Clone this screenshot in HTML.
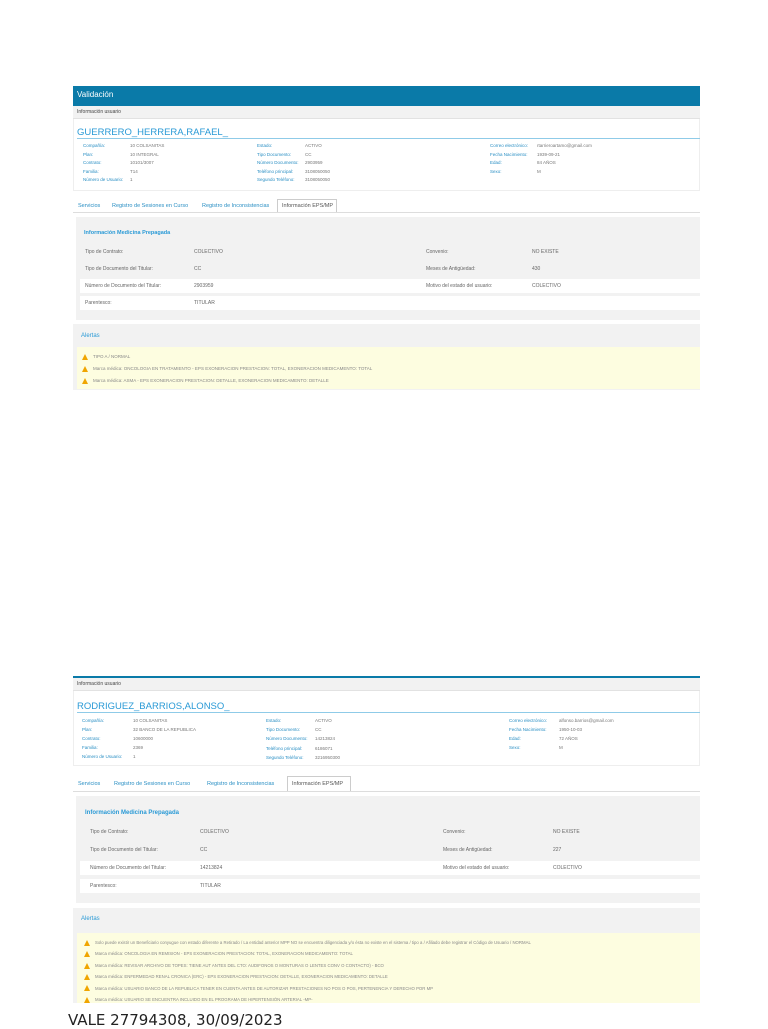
<!DOCTYPE html>
<html><head><meta charset="utf-8">
<style>
*{margin:0;padding:0;box-sizing:border-box}
body{width:768px;height:1024px;background:#fff;position:relative;overflow:hidden;font-family:"Liberation Sans",sans-serif;color:#555}
.a{position:absolute;white-space:nowrap}
.lb{color:#2a8fc4;font-size:4.5px}
.v{color:#777;font-size:4.5px}
.t{font-size:5.5px;color:#2a8fc4}
.r{color:#666;font-size:5px}
.warn{display:inline-block;width:0;height:0;border-left:3.5px solid transparent;border-right:3.5px solid transparent;border-bottom:6px solid #f0a500;vertical-align:middle;margin-right:5px}
.al{font-size:4.5px;color:#888}
</style></head><body>

<div class="a" style="left:73px;top:86px;width:627px;height:20px;background:#0a7aa8"></div>
<div class="a" style="left:77px;top:90px;font-size:8px;color:#fff">Validación</div>
<div class="a" style="left:73px;top:106px;width:627px;height:13px;background:#f2f2f2;border-bottom:1px solid #e2e2e2"></div>
<div class="a" style="left:77px;top:109px;font-size:5px;color:#444">Información usuario</div>
<div class="a" style="left:73px;top:119px;width:627px;height:72px;border:1px solid #eee;border-top:none"></div>
<div class="a" style="left:77px;top:127px;font-size:9.5px;color:#2a9ad6">GUERRERO_HERRERA,RAFAEL_</div>
<div class="a" style="left:77px;top:138px;width:623px;height:1px;background:#8fcbe8"></div>
<div class="a lb" style="left:83px;top:142px;line-height:8.6px">Compañía:<br>Plan:<br>Contrato:<br>Familia:<br>Número de Usuario:</div>
<div class="a v" style="left:130px;top:142px;line-height:8.6px">10 COLSANITAS<br>10 INTEGRAL<br>10101/3007<br>T14<br>1</div>
<div class="a lb" style="left:257px;top:142px;line-height:8.6px">Estado:<br>Tipo Documento:<br>Número Documento:<br>Teléfono principal:<br>Segundo Teléfono:</div>
<div class="a v" style="left:305px;top:142px;line-height:8.6px">ACTIVO<br>CC<br>2903959<br>3108050050<br>3108050050</div>
<div class="a lb" style="left:490px;top:142px;line-height:8.6px">Correo electrónico:<br>Fecha Nacimiento:<br>Edad:<br>Sexo:</div>
<div class="a v" style="left:537px;top:142px;line-height:8.6px">rtarrieroartamo@gmail.com<br>1939-09-21<br>84 AÑOS<br>M</div>

<div class="a t" style="left:78px;top:203px">Servicios</div>
<div class="a t" style="left:112px;top:203px">Registro de Sesiones en Curso</div>
<div class="a t" style="left:202px;top:203px">Registro de Inconsistencias</div>
<div class="a" style="left:277px;top:199px;width:60px;height:14px;border:1px solid #ccc;border-bottom:none;background:#fff"></div>
<div class="a" style="left:282px;top:203px;font-size:5.5px;color:#555">Información EPS/MP</div>
<div class="a" style="left:73px;top:212px;width:627px;height:1px;background:#ddd"></div>

<div class="a" style="left:76px;top:217px;width:624px;height:103px;background:#f2f2f2"></div>
<div class="a" style="left:84px;top:230px;font-size:5.5px;color:#2a9ad6;font-weight:bold">Información Medicina Prepagada</div>
<div class="a" style="left:80px;top:279px;width:620px;height:14px;background:#fff"></div>
<div class="a" style="left:80px;top:296px;width:620px;height:14px;background:#fff"></div>
<div class="a r" style="left:85px;top:249px">Tipo de Contrato:</div><div class="a r" style="left:194px;top:249px">COLECTIVO</div>
<div class="a r" style="left:426px;top:249px">Convenio:</div><div class="a r" style="left:532px;top:249px">NO EXISTE</div>
<div class="a r" style="left:85px;top:266px">Tipo de Documento del Titular:</div><div class="a r" style="left:194px;top:266px">CC</div>
<div class="a r" style="left:426px;top:266px">Meses de Antigüedad:</div><div class="a r" style="left:532px;top:266px">430</div>
<div class="a r" style="left:85px;top:283px">Número de Documento del Titular:</div><div class="a r" style="left:194px;top:283px">2903959</div>
<div class="a r" style="left:426px;top:283px">Motivo del estado del usuario:</div><div class="a r" style="left:532px;top:283px">COLECTIVO</div>
<div class="a r" style="left:85px;top:300px">Parentesco:</div><div class="a r" style="left:194px;top:300px">TITULAR</div>

<div class="a" style="left:73px;top:324px;width:627px;height:66px;background:#f2f2f2"></div>
<div class="a" style="left:81px;top:333px;font-size:6px;color:#2a9ad6">Alertas</div>
<div class="a" style="left:77px;top:347px;width:623px;height:42px;background:#fdfde0"></div>
<div class="a al" style="left:82px;top:351px;line-height:12px"><span class="warn"></span>TIPO A / NORMAL<br><span class="warn"></span>Marca médica: ONCOLOGIA EN TRATAMIENTO - EPS EXONERACION PRESTACION: TOTAL, EXONERACION MEDICAMENTO: TOTAL<br><span class="warn"></span>Marca médica: ASMA - EPS EXONERACION PRESTACION: DETALLE, EXONERACION MEDICAMENTO: DETALLE</div>

<div class="a" style="left:73px;top:676px;width:627px;height:2px;background:#0a7aa8"></div>
<div class="a" style="left:73px;top:678px;width:627px;height:13px;background:#f2f2f2;border-bottom:1px solid #e2e2e2"></div>
<div class="a" style="left:77px;top:681px;font-size:5px;color:#444">Información usuario</div>
<div class="a" style="left:73px;top:691px;width:627px;height:75px;border:1px solid #eee;border-top:none"></div>
<div class="a" style="left:77px;top:701px;font-size:9.5px;color:#2a9ad6">RODRIGUEZ_BARRIOS,ALONSO_</div>
<div class="a" style="left:77px;top:712px;width:623px;height:1px;background:#8fcbe8"></div>
<div class="a lb" style="left:82px;top:716px;line-height:9px">Compañía:<br>Plan:<br>Contrato:<br>Familia:<br>Número de Usuario:</div>
<div class="a v" style="left:133px;top:716px;line-height:9px">10 COLSANITAS<br>32 BANCO DE LA REPUBLICA<br>10600000<br>2369<br>1</div>
<div class="a lb" style="left:266px;top:716px;line-height:9.2px">Estado:<br>Tipo Documento:<br>Número Documento:<br>Teléfono principal:<br>Segundo Teléfono:</div>
<div class="a v" style="left:315px;top:716px;line-height:9.2px">ACTIVO<br>CC<br>14213824<br>6186071<br>3216950300</div>
<div class="a lb" style="left:509px;top:716px;line-height:9px">Correo electrónico:<br>Fecha Nacimiento:<br>Edad:<br>Sexo:</div>
<div class="a v" style="left:559px;top:716px;line-height:9px">alfonso.barrios@gmail.com<br>1950-10-03<br>72 AÑOS<br>M</div>

<div class="a t" style="left:78px;top:781px">Servicios</div>
<div class="a t" style="left:114px;top:781px">Registro de Sesiones en Curso</div>
<div class="a t" style="left:207px;top:781px">Registro de Inconsistencias</div>
<div class="a" style="left:287px;top:776px;width:64px;height:16px;border:1px solid #ccc;border-bottom:none;background:#fff"></div>
<div class="a" style="left:292px;top:781px;font-size:5.5px;color:#555">Información EPS/MP</div>
<div class="a" style="left:73px;top:791px;width:627px;height:1px;background:#ddd"></div>

<div class="a" style="left:76px;top:796px;width:624px;height:107px;background:#f2f2f2"></div>
<div class="a" style="left:85px;top:810px;font-size:6px;color:#2a9ad6;font-weight:bold">Información Medicina Prepagada</div>
<div class="a" style="left:80px;top:861px;width:620px;height:14px;background:#fff"></div>
<div class="a" style="left:80px;top:879px;width:620px;height:14px;background:#fff"></div>
<div class="a r" style="left:90px;top:829px">Tipo de Contrato:</div><div class="a r" style="left:200px;top:829px">COLECTIVO</div>
<div class="a r" style="left:443px;top:829px">Convenio:</div><div class="a r" style="left:553px;top:829px">NO EXISTE</div>
<div class="a r" style="left:90px;top:847px">Tipo de Documento del Titular:</div><div class="a r" style="left:200px;top:847px">CC</div>
<div class="a r" style="left:443px;top:847px">Meses de Antigüedad:</div><div class="a r" style="left:553px;top:847px">227</div>
<div class="a r" style="left:90px;top:865px">Número de Documento del Titular:</div><div class="a r" style="left:200px;top:865px">14213824</div>
<div class="a r" style="left:443px;top:865px">Motivo del estado del usuario:</div><div class="a r" style="left:553px;top:865px">COLECTIVO</div>
<div class="a r" style="left:90px;top:883px">Parentesco:</div><div class="a r" style="left:200px;top:883px">TITULAR</div>

<div class="a" style="left:73px;top:908px;width:627px;height:96px;background:#f2f2f2"></div>
<div class="a" style="left:81px;top:916px;font-size:6px;color:#2a9ad6">Alertas</div>
<div class="a" style="left:77px;top:933px;width:623px;height:71px;background:#fdfde0"></div>
<div class="a al" style="left:84px;top:937px;line-height:11.4px;font-size:4.3px"><span class="warn"></span>Solo puede existir un Beneficiario conyugue con estado diferente a Retirado / La entidad anterior MPP NO se encuentra diligenciada y/o ésta no existe en el sistema / tipo a / Afiliado debe registrar el Código de Usuario / NORMAL<br><span class="warn"></span>Marca médica: ONCOLOGIA EN REMISION - EPS EXONERACION PRESTACION: TOTAL, EXONERACION MEDICAMENTO: TOTAL<br><span class="warn"></span>Marca médica: REVISAR ARCHIVO DE TOPES: TIENE AUT ANTES DEL CTO: AUDIFONOS O MONTURAS O LENTES CONV O CONTACTO) - BCO<br><span class="warn"></span>Marca médica: ENFERMEDAD RENAL CRONICA (ERC) - EPS EXONERACION PRESTACION: DETALLE, EXONERACION MEDICAMENTO: DETALLE<br><span class="warn"></span>Marca médica: USUARIO BANCO DE LA REPUBLICA TENER EN CUENTA ANTES DE AUTORIZAR PRESTACIONES NO POS O POS, PERTENENCIA Y DERECHO POR MP<br><span class="warn"></span>Marca médica: USUARIO SE ENCUENTRA INCLUIDO EN EL PROGRAMA DE HIPERTENSIÓN ARTERIAL -MP-</div>
<div class="a" style="left:73px;top:1003px;width:627px;height:4px;background:#fff"></div>

<div class="a" style="left:68px;top:1011px;font-size:15px;color:#222;font-family:'DejaVu Sans',sans-serif">VALE 27794308, 30/09/2023</div>
</body></html>
